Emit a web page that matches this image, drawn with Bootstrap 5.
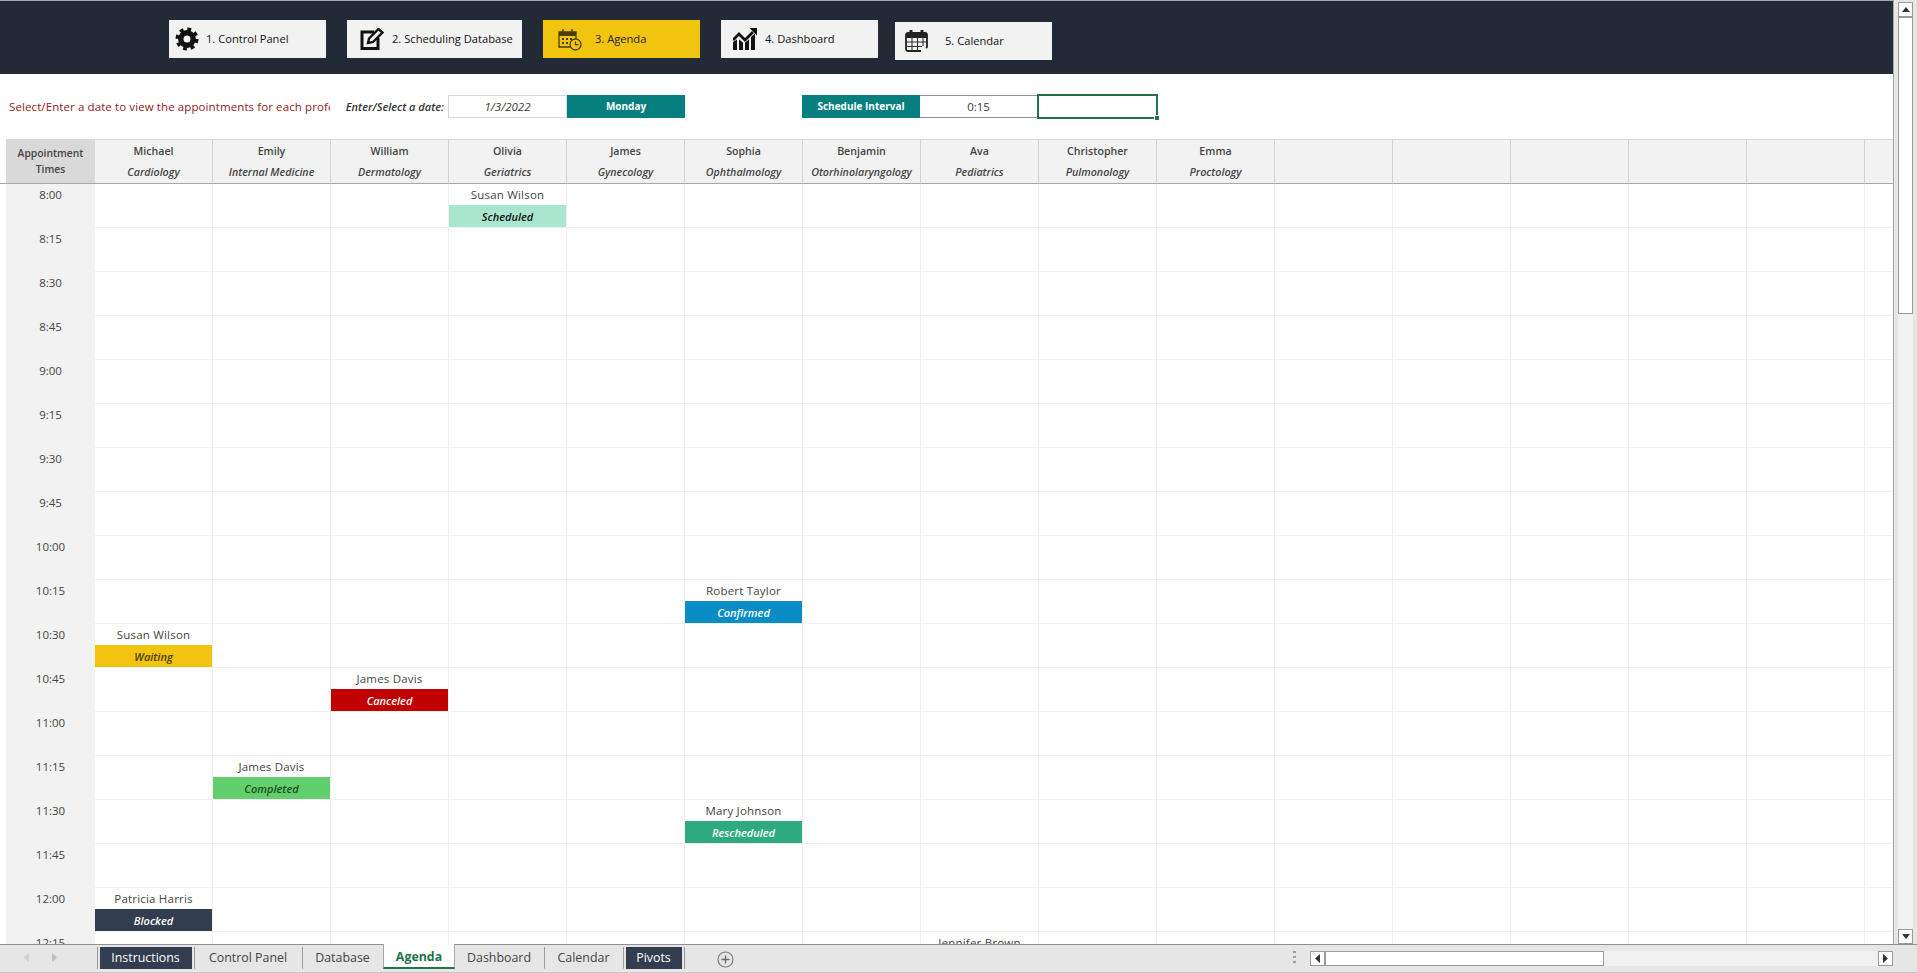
<!DOCTYPE html>
<html lang="en">
<head>
<meta charset="utf-8">
<title>Agenda</title>
<link href="https://cdn.jsdelivr.net/npm/bootstrap@5.3.0/dist/css/bootstrap.min.css" rel="stylesheet">
<style>
html,body{height:100%;overflow:hidden}
body{font-family:"Open Sans","Liberation Sans",sans-serif;font-size:11.5px;color:#3a3a3a;background:#fff}
.app-frame{height:973px;width:1917px}
.work-pane{width:1894px;height:944px;overflow:hidden;border-right:1px solid #a6a6a6}
.top-band{height:74px;background:#222b35;border-top:1px solid #a5a9ae;padding:19px 0 0 169px;gap:21px}
.nav-tile{width:157px;height:38px;background:#f2f2f2;color:#111;font-size:11.15px;position:relative;display:flex;align-items:center}
.nav-tile svg{flex:none}
.tile-wide{width:175px}
.tile-on{background:#f1c40f;color:#222}
.tile-low{margin:2px 0 0 -4px}
.t1{padding-left:6px;gap:7px}
.t2{padding-left:13px;gap:8px}
.t3{padding-left:14px;gap:13px}
.t4{padding-left:12px;gap:8px}
.t5{padding-left:10px;gap:17px}
.date-band{height:65px;padding:21px 0 0 9px}
.intro-clip{width:321px;height:23px;line-height:23px;overflow:hidden;white-space:nowrap;color:#8e1b1b;font-size:11.5px;letter-spacing:.1px}
.date-label{width:118px;height:23px;line-height:23px;text-align:right;padding-right:4px;font-style:italic;font-weight:600;color:#333;font-size:11px;white-space:nowrap}
.form-cell{width:118px;height:23px;line-height:21px;text-align:center;border:1px solid #d9d9d9;font-size:11.5px;flex:none}
.date-cell{width:119px}
.teal-cell{background:#087f7f;color:#fff;font-weight:700;border:1px solid #087f7f;font-size:10px}
.gray-edge{border:1px solid #8f8f8f;border-left:0}
.cell-gap{width:117px;flex:none}
.picked-cell{position:relative;width:121px;height:25px;margin:-1px 0 0 -1px;border:2px solid #217346;flex:none}
.picked-cell::after{content:"";position:absolute;right:-4px;bottom:-4px;width:6px;height:6px;background:#217346;border:1px solid #fff}
.sheet-grid{table-layout:fixed;width:1983px;border-collapse:separate;border-spacing:0;margin:0}
.sheet-grid th,.sheet-grid td{padding:0;text-align:center;vertical-align:top;font-weight:400;overflow:hidden;white-space:nowrap}
.w-stub{width:6px}.w-time{width:89px}.w-day{width:118px}
.head-row th{height:45px;background:#f2f2f2;border-top:1px solid #d9d9d9;border-right:1px solid #d2d2d2;border-bottom:1px solid #a6a6a6;color:#444}
.head-row th.stub-cell{background:#fff;border-top:0;border-right:0}
.sheet-grid .head-row th.time-head{background:#d9d9d9;border-right:0;font-weight:600;line-height:16px;padding-top:5px;font-size:10.3px}
.doc-name{height:21px;line-height:22px;font-weight:600;font-size:10.6px}
.doc-spec{height:22px;line-height:22px;font-style:italic;font-weight:600;font-size:10.7px}
.time-row td,.time-row th{height:44px;border-right:1px solid #f0f0f0;border-bottom:1px solid #f0f0f0}
.time-row th.stub-cell{border:0;background:#fff}
.time-row th.time-cell{background:#f2f2f2;border-right:0;border-bottom:0;line-height:22px;color:#444;font-size:11.5px}
.who{height:21px;line-height:22px;font-size:11.5px;letter-spacing:.2px;color:#444}
.state{height:22px;padding-top:1px;line-height:21px;font-style:italic;font-weight:600;font-size:11px}
.st-scheduled{background:#a9e6cf;color:#111}
.st-confirmed{background:#0a8dc4;color:#fff}
.st-waiting{background:#f1c40f;color:#4a3c05}
.st-canceled{background:#c00000;color:#fff}
.st-completed{background:#62cf6e;color:#1c4d23}
.st-rescheduled{background:#2eaa80;color:#fff}
.st-blocked{background:#323e4f;color:#fff}
.v-scroll{width:23px;height:944px;background:#e6e6e6;padding:2px 3px 0 4px}
.v-rail{width:15px;height:942px;background:#f1f1f1;position:relative}
.sb-btn{background:#fff;border:1px solid #9a9a9a;display:flex;align-items:center;justify-content:center;flex:none}
.v-btn{width:15px;height:15px}
.v-thumb{width:15px;height:297px;background:#fff;border:1px solid #9a9a9a;margin-top:0}
.tab-strip{height:29px;background:#e6e6e6;border-top:1px solid #8f8f8f;border-bottom:1px solid #c8c8c8}
.sheet-arrows{width:97px;gap:23px;padding-left:24px;color:#c4c4c4}
.tab-list{flex-wrap:nowrap;border-left:1px solid #9a9a9a;margin:2px 0;height:22px}
.tab-list .nav-link{padding:0;height:22px;line-height:21px;text-align:center;color:#444;font-size:12.4px;border-right:1px solid transparent}
.tab-box{flex:none}
.tab-rule{border-right:1px solid #9a9a9a}
.tab-dark .nav-link{background:#323e4f;color:#fff;margin:0 2px}
.tab-active{margin-top:-3px}
.tab-list .tab-active .nav-link{background:#fff;color:#217346;font-weight:700;height:25px;padding-top:3px;line-height:20px;border-left:1px solid #a6a6a6;border-right:1px solid #a6a6a6;border-bottom:2px solid #217346}
.w1{width:97px}.w2{width:108px}.w3{width:80px}.w4{width:72px}.w5{width:90px}.w6{width:79px}.w7{width:61px}
.tab-add{margin-left:32px;flex:none}
.h-scroll{position:absolute;left:1294px;top:6px;height:15px;width:598px;gap:0}
.grip{position:absolute;left:-1px;top:0;width:3px;height:14px;background:repeating-linear-gradient(#a0a0a0 0 2px,transparent 2px 5px)}
.h-rail{position:absolute;left:16px;top:0;width:583px;height:15px;background:#f1f1f1}
.h-btn{width:15px;height:15px;position:absolute;top:0}
.h-thumb{position:absolute;left:15px;top:0;width:279px;height:15px;background:#fff;border:1px solid #9a9a9a}
</style>
</head>
<body>
<div class="app-frame d-flex flex-column">
  <div class="d-flex">
    <main class="work-pane flex-none">
      <div class="top-band d-flex align-items-start">
        <a class="nav-tile t1 text-decoration-none">
          <svg width="24" height="24" viewBox="0 0 24 24"><circle cx="12" cy="12" r="9.5" fill="none" stroke="#111" stroke-width="4" stroke-dasharray="3.73 3.73"/><circle cx="12" cy="12" r="6.2" fill="none" stroke="#111" stroke-width="5.400"/></svg>
          <span>1. Control Panel</span>
        </a>
        <a class="nav-tile tile-wide t2 text-decoration-none">
          <svg width="24" height="22" viewBox="0 0 24 22"><path d="M14 4H2v16.500h16V10" fill="none" stroke="#111" stroke-width="3"/><path d="M8 15l1-4.500L18.500 1l4 3.500L13 14z" fill="none" stroke="#111" stroke-width="2.400"/></svg>
          <span>2. Scheduling Database</span>
        </a>
        <a class="nav-tile tile-on t3 text-decoration-none">
          <svg width="25" height="24" viewBox="0 0 25 24"><path d="M13 20H2V5h17v9" fill="none" stroke="#4b3c0a" stroke-width="1.300"/><path d="M2 5h17v4H2z" fill="#4b3c0a"/><path d="M6 2v4M15 2v4" stroke="#4b3c0a" stroke-width="1.400"/><path d="M5 11h2v2H5zM9 11h2v2H9zM13 11h2v2h-2zM5 15h2v2H5zM9 15h2v2H9z" fill="#4b3c0a"/><circle cx="18.500" cy="17.500" r="5.500" fill="#f1c40f" stroke="#4b3c0a" stroke-width="1.300"/><path d="M18.500 14.500v3.200h3" fill="none" stroke="#4b3c0a" stroke-width="1.200"/></svg>
          <span>3. Agenda</span>
        </a>
        <a class="nav-tile t4 text-decoration-none">
          <svg width="24" height="22" viewBox="0 0 24 22"><path d="M0 22v-8l4-2.500V22zM6 22V11.500l4 3V22zM12 22v-7.500l4-3V22zM18 22V9l4-3.500V22z" fill="#111"/><path d="M0 12l6-6 6 6 8-8" fill="none" stroke="#111" stroke-width="2.800"/><path d="M16.500 0H24v7.500z" fill="#111"/></svg>
          <span>4. Dashboard</span>
        </a>
        <a class="nav-tile tile-low t5 text-decoration-none">
          <svg width="23" height="23" viewBox="0 0 23 23"><path d="M16 21H3a2 2 0 0 1-2-2V5a2 2 0 0 1 2-2h17a2 2 0 0 1 2 2v12l-1 1" fill="none" stroke="#222" stroke-width="1.800"/><path d="M1 4h21v4H1z" fill="#222"/><path d="M6 0v6M17 0v6" stroke="#222" stroke-width="3"/><path d="M1 12h20M1 16.500h16M7 8v13M12.500 8v13M18 8v8" stroke="#333" stroke-width="1.100"/></svg>
          <span>5. Calendar</span>
        </a>
      </div>

      <div class="date-band d-flex align-items-start">
        <div class="intro-clip flex-none">Select/Enter a date to view the appointments for each profe</div>
        <div class="date-label flex-none">Enter/Select a date:</div>
        <div class="form-cell date-cell fst-italic">1/3/2022</div>
        <div class="form-cell teal-cell">Monday</div>
        <div class="cell-gap"></div>
        <div class="form-cell teal-cell">Schedule Interval</div>
        <div class="form-cell gray-edge">0:15</div>
        <div class="picked-cell"></div>
      </div>

      <table class="sheet-grid">
        <colgroup><col class="w-stub"><col class="w-time"><col class="w-day" span="16"></colgroup>
        <thead>
          <tr class="head-row">
            <th class="stub-cell"></th><th class="time-head">Appointment<br>Times</th>
            <th><div class="doc-name">Michael</div><div class="doc-spec">Cardiology</div></th>
            <th><div class="doc-name">Emily</div><div class="doc-spec">Internal Medicine</div></th>
            <th><div class="doc-name">William</div><div class="doc-spec">Dermatology</div></th>
            <th><div class="doc-name">Olivia</div><div class="doc-spec">Geriatrics</div></th>
            <th><div class="doc-name">James</div><div class="doc-spec">Gynecology</div></th>
            <th><div class="doc-name">Sophia</div><div class="doc-spec">Ophthalmology</div></th>
            <th><div class="doc-name">Benjamin</div><div class="doc-spec">Otorhinolaryngology</div></th>
            <th><div class="doc-name">Ava</div><div class="doc-spec">Pediatrics</div></th>
            <th><div class="doc-name">Christopher</div><div class="doc-spec">Pulmonology</div></th>
            <th><div class="doc-name">Emma</div><div class="doc-spec">Proctology</div></th>
            <th></th><th></th><th></th><th></th><th></th><th></th>
          </tr>
        </thead>
        <tbody>
          <tr class="time-row"><th class="stub-cell"></th><th class="time-cell">8:00</th><td></td><td></td><td></td><td><div class="who">Susan Wilson</div><div class="state st-scheduled">Scheduled</div></td><td></td><td></td><td></td><td></td><td></td><td></td><td></td><td></td><td></td><td></td><td></td><td></td></tr>
          <tr class="time-row"><th class="stub-cell"></th><th class="time-cell">8:15</th><td></td><td></td><td></td><td></td><td></td><td></td><td></td><td></td><td></td><td></td><td></td><td></td><td></td><td></td><td></td><td></td></tr>
          <tr class="time-row"><th class="stub-cell"></th><th class="time-cell">8:30</th><td></td><td></td><td></td><td></td><td></td><td></td><td></td><td></td><td></td><td></td><td></td><td></td><td></td><td></td><td></td><td></td></tr>
          <tr class="time-row"><th class="stub-cell"></th><th class="time-cell">8:45</th><td></td><td></td><td></td><td></td><td></td><td></td><td></td><td></td><td></td><td></td><td></td><td></td><td></td><td></td><td></td><td></td></tr>
          <tr class="time-row"><th class="stub-cell"></th><th class="time-cell">9:00</th><td></td><td></td><td></td><td></td><td></td><td></td><td></td><td></td><td></td><td></td><td></td><td></td><td></td><td></td><td></td><td></td></tr>
          <tr class="time-row"><th class="stub-cell"></th><th class="time-cell">9:15</th><td></td><td></td><td></td><td></td><td></td><td></td><td></td><td></td><td></td><td></td><td></td><td></td><td></td><td></td><td></td><td></td></tr>
          <tr class="time-row"><th class="stub-cell"></th><th class="time-cell">9:30</th><td></td><td></td><td></td><td></td><td></td><td></td><td></td><td></td><td></td><td></td><td></td><td></td><td></td><td></td><td></td><td></td></tr>
          <tr class="time-row"><th class="stub-cell"></th><th class="time-cell">9:45</th><td></td><td></td><td></td><td></td><td></td><td></td><td></td><td></td><td></td><td></td><td></td><td></td><td></td><td></td><td></td><td></td></tr>
          <tr class="time-row"><th class="stub-cell"></th><th class="time-cell">10:00</th><td></td><td></td><td></td><td></td><td></td><td></td><td></td><td></td><td></td><td></td><td></td><td></td><td></td><td></td><td></td><td></td></tr>
          <tr class="time-row"><th class="stub-cell"></th><th class="time-cell">10:15</th><td></td><td></td><td></td><td></td><td></td><td><div class="who">Robert Taylor</div><div class="state st-confirmed">Confirmed</div></td><td></td><td></td><td></td><td></td><td></td><td></td><td></td><td></td><td></td><td></td></tr>
          <tr class="time-row"><th class="stub-cell"></th><th class="time-cell">10:30</th><td><div class="who">Susan Wilson</div><div class="state st-waiting">Waiting</div></td><td></td><td></td><td></td><td></td><td></td><td></td><td></td><td></td><td></td><td></td><td></td><td></td><td></td><td></td><td></td></tr>
          <tr class="time-row"><th class="stub-cell"></th><th class="time-cell">10:45</th><td></td><td></td><td><div class="who">James Davis</div><div class="state st-canceled">Canceled</div></td><td></td><td></td><td></td><td></td><td></td><td></td><td></td><td></td><td></td><td></td><td></td><td></td><td></td></tr>
          <tr class="time-row"><th class="stub-cell"></th><th class="time-cell">11:00</th><td></td><td></td><td></td><td></td><td></td><td></td><td></td><td></td><td></td><td></td><td></td><td></td><td></td><td></td><td></td><td></td></tr>
          <tr class="time-row"><th class="stub-cell"></th><th class="time-cell">11:15</th><td></td><td><div class="who">James Davis</div><div class="state st-completed">Completed</div></td><td></td><td></td><td></td><td></td><td></td><td></td><td></td><td></td><td></td><td></td><td></td><td></td><td></td><td></td></tr>
          <tr class="time-row"><th class="stub-cell"></th><th class="time-cell">11:30</th><td></td><td></td><td></td><td></td><td></td><td><div class="who">Mary Johnson</div><div class="state st-rescheduled">Rescheduled</div></td><td></td><td></td><td></td><td></td><td></td><td></td><td></td><td></td><td></td><td></td></tr>
          <tr class="time-row"><th class="stub-cell"></th><th class="time-cell">11:45</th><td></td><td></td><td></td><td></td><td></td><td></td><td></td><td></td><td></td><td></td><td></td><td></td><td></td><td></td><td></td><td></td></tr>
          <tr class="time-row"><th class="stub-cell"></th><th class="time-cell">12:00</th><td><div class="who">Patricia Harris</div><div class="state st-blocked">Blocked</div></td><td></td><td></td><td></td><td></td><td></td><td></td><td></td><td></td><td></td><td></td><td></td><td></td><td></td><td></td><td></td></tr>
          <tr class="time-row"><th class="stub-cell"></th><th class="time-cell">12:15</th><td></td><td></td><td></td><td></td><td></td><td></td><td></td><td><div class="who">Jennifer Brown</div></td><td></td><td></td><td></td><td></td><td></td><td></td><td></td><td></td></tr>
        </tbody>
      </table>
    </main>
    <aside class="v-scroll flex-none">
      <div class="v-rail d-flex flex-column">
        <div class="sb-btn v-btn"><svg width="8" height="5" viewBox="0 0 8 5"><path d="M4 0l4 5H0z" fill="#333"/></svg></div>
        <div class="v-thumb"></div>
        <div class="sb-btn v-btn mt-auto"><svg width="8" height="5" viewBox="0 0 8 5"><path d="M0 0h8L4 5z" fill="#333"/></svg></div>
      </div>
    </aside>
  </div>

  <footer class="tab-strip d-flex align-items-start position-relative">
    <div class="sheet-arrows d-flex align-items-center flex-none pt-2">
      <svg width="5" height="9" viewBox="0 0 5 9"><path d="M5 0v9L0 4.500z" fill="#cfcfcf"/></svg>
      <svg width="5" height="9" viewBox="0 0 5 9"><path d="M0 0v9l5-4.500z" fill="#bdbdbd"/></svg>
    </div>
    <ul class="nav tab-list">
      <li class="tab-box w1 tab-dark tab-rule"><a class="nav-link">Instructions</a></li>
      <li class="tab-box w2 tab-rule"><a class="nav-link">Control Panel</a></li>
      <li class="tab-box w3"><a class="nav-link">Database</a></li>
      <li class="tab-box w4 tab-active"><a class="nav-link">Agenda</a></li>
      <li class="tab-box w5 tab-rule"><a class="nav-link">Dashboard</a></li>
      <li class="tab-box w6 tab-rule"><a class="nav-link">Calendar</a></li>
      <li class="tab-box w7 tab-dark tab-rule"><a class="nav-link">Pivots</a></li>
      <li class="tab-add"><svg width="17" height="17" viewBox="0 0 17 17" class="mt-1"><circle cx="8.500" cy="8.500" r="7.500" fill="none" stroke="#7a7a7a" stroke-width="1.200"/><path d="M8.500 4.500v8M4.500 8.500h8" stroke="#6a6a6a" stroke-width="1.400"/></svg></li>
    </ul>
    <div class="h-scroll">
      <span class="grip"></span>
      <div class="h-rail">
        <div class="sb-btn h-btn start-0"><svg width="5" height="9" viewBox="0 0 5 9"><path d="M5 0v9L0 4.500z" fill="#333"/></svg></div>
        <div class="h-thumb"></div>
        <div class="sb-btn h-btn end-0"><svg width="5" height="9" viewBox="0 0 5 9"><path d="M0 0v9l5-4.500z" fill="#333"/></svg></div>
      </div>
    </div>
  </footer>
</div>
<script src="https://cdn.jsdelivr.net/npm/bootstrap@5.3.0/dist/js/bootstrap.bundle.min.js"></script>
</body>
</html>
